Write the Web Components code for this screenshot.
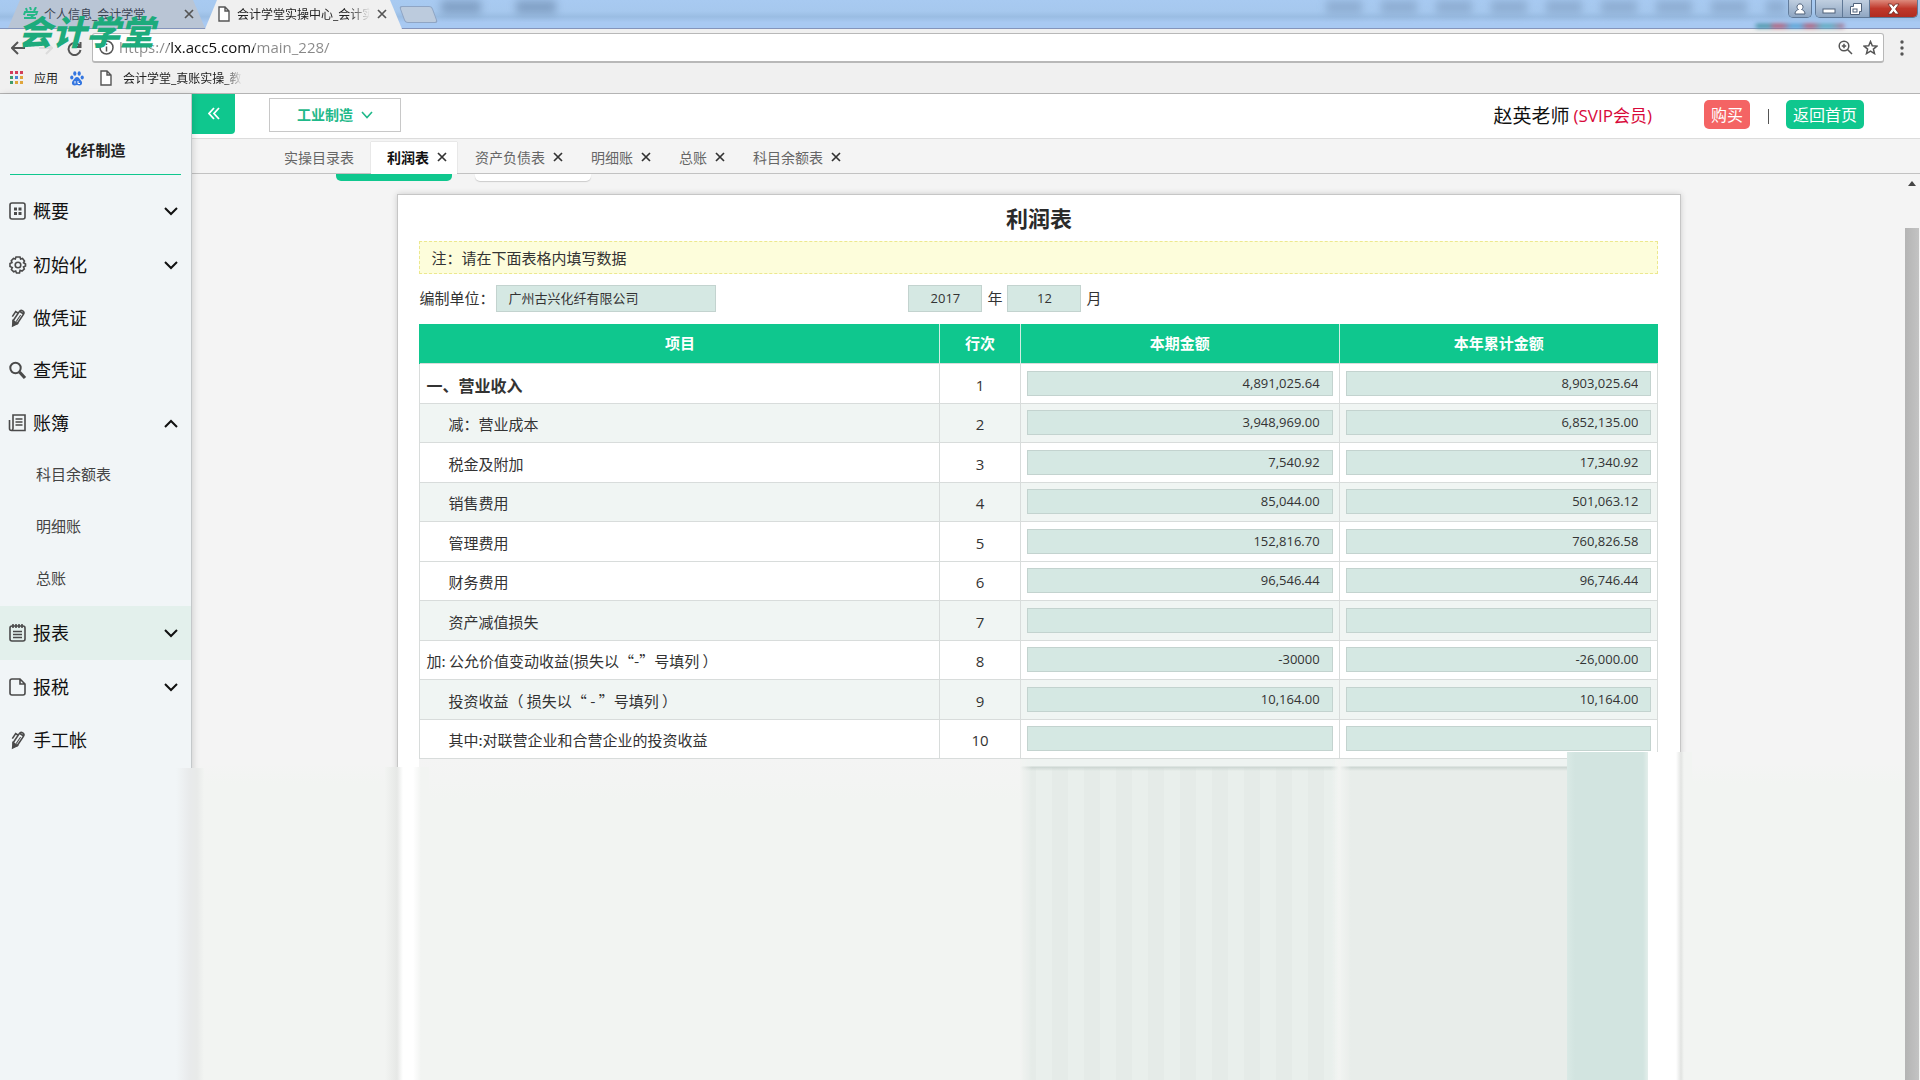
<!DOCTYPE html>
<html lang="zh-CN">
<head>
<meta charset="utf-8">
<title>会计学堂实操中心</title>
<style>
  :root {
    --green: #0fc78e;
    --line: #c8c8c8;
    --field: #d5e8e3;
    --latin: "Open Sans", "Noto Sans", "Noto Sans CJK SC", sans-serif;
  }
  body {
    margin: 0;
    height: 100vh;
    overflow: hidden;
    display: flex;
    flex-direction: column;
    font-family: "Noto Sans CJK SC", "Open Sans", sans-serif;
    font-size: 15px;
    color: #333;
  }
  .app {
    flex: 1;
    min-height: 0;
    display: flex;
  }
  .work {
    flex: 1;
    min-width: 0;
    display: flex;
    flex-direction: column;
  }
</style>
</head>
<body>
  <browser-bar></browser-bar>
  <div class="app">
    <side-nav heading="化纤制造">
      <side-item icon="grid" arrow="down">概要</side-item>
      <side-item icon="gear" arrow="down">初始化</side-item>
      <side-item icon="pen">做凭证</side-item>
      <side-item icon="search">查凭证</side-item>
      <side-item icon="book" arrow="up">账簿</side-item>
      <side-item sub>科目余额表</side-item>
      <side-item sub>明细账</side-item>
      <side-item sub>总账</side-item>
      <side-item icon="note" arrow="down" active>报表</side-item>
      <side-item icon="page" arrow="down">报税</side-item>
      <side-item icon="pen">手工帐</side-item>
    </side-nav>
    <div class="work">
      <top-bar>
        <span slot="user">赵英老师</span>
        <span slot="level">(SVIP会员)</span>
      </top-bar>
      <tab-strip>
        <sheet-tab fixed>实操目录表</sheet-tab>
        <sheet-tab active>利润表</sheet-tab>
        <sheet-tab>资产负债表</sheet-tab>
        <sheet-tab>明细账</sheet-tab>
        <sheet-tab>总账</sheet-tab>
        <sheet-tab>科目余额表</sheet-tab>
      </tab-strip>
      <scroll-pane>
        <profit-sheet></profit-sheet>
      </scroll-pane>
    </div>
  </div>

<script>
const cross = `<svg width="10" height="10" viewBox="0 0 10 10" fill="none" stroke="currentColor" stroke-width="1.700"><path d="M1 1l8 8M9 1l-8 8"/></svg>`;
const sheetIcon = `<svg width="12" height="16" viewBox="0 0 12 16" fill="#fff" stroke="#555" stroke-width="1.4"><path d="M1 1h6l4 4v10H1zM7 1v4h4"/></svg>`;

class BrowserBar extends HTMLElement {
  constructor() {
    super();
    this.attachShadow({ mode: "open" });
  }

  connectedCallback() {
    this.shadowRoot.innerHTML = `
      <style>
        :host {
          display: block;
          position: relative;
          font-family: var(--latin);
          font-size: 12px;
          background: #f0f0f0;
          border-bottom: 1px solid #b4b4b4;
        }
        * { box-sizing: border-box; }
        button { font: inherit; border: 0; padding: 0; background: none; display: flex; align-items: center; justify-content: center; }
        svg { flex: none; display: block; }
        .title {
          height: 29px;
          display: flex;
          align-items: flex-start;
          padding: 0 2px 0 8px;
          background: linear-gradient(#a8caf1, #a6c8ee 40%, #9abde3 60%, #a8c9f2 80%);
          border-bottom: 1px solid #8494bb;
        }
        .tab {
          height: 28px;
          width: 197px;
          display: flex;
          align-items: center;
          padding: 0 11px 0 36px;
          color: #3c4654;
          background: #b9c5d5;
          clip-path: polygon(0 100%, 12px 0, 185px 0, 100% 100%);
        }
        .tab.on {
          height: 29px;
          padding: 0 15px 2px 13px;
          gap: 7px;
          color: #222;
          background: #f0f0f0;
          margin-bottom: -1px;
        }
        .tab span { flex: 1; white-space: nowrap; overflow: hidden; }
        .tab.on span { -webkit-mask-image: linear-gradient(90deg, #000 85%, transparent); }
        .tab button { color: #555; }
        .new { width: 33px; height: 17px; margin-top: 6px; background: #bccbdd; border: 1px solid #8fa5c4; border-radius: 3px; transform: skewX(20deg); }
        .haze { height: 14px; filter: blur(4px); background: repeating-linear-gradient(90deg, #7391b5 0 40px, transparent 40px 75px); }
        .haze.left { width: 120px; margin-left: 6px; opacity: .7; }
        .haze.right { width: 460px; margin-left: auto; opacity: .6; background: repeating-linear-gradient(90deg, #7f9dc1 0 36px, transparent 36px 55px); }
        .win { display: flex; margin-left: 2px; height: 18px; border: 1px solid #5f7896; border-top: 0; border-radius: 0 0 5px 5px; overflow: hidden; }
        .win + .win { margin-left: 3px; }
        .win button { width: 27px; background: linear-gradient(#c0cfe0, #8fa6c2); border-right: 1px solid #5f7896; }
        .win.user button { width: 22px; border: 0; }
        .win .close { width: 47px; border: 0; background: linear-gradient(#dd8a7c, #c0382b 50%, #b02c20); }
        .address { display: flex; align-items: center; padding: 4px 0 0 0; }
        .nav { width: 92px; height: 30px; display: flex; align-items: center; justify-content: space-between; padding: 0 10px 0 11px; }
        .url {
          flex: 1;
          height: 30px;
          display: flex;
          align-items: center;
          gap: 5px;
          padding: 0 5px 0 6px;
          background: #fff;
          border: 1px solid #b8b8b8;
          border-bottom-width: 2px;
          border-radius: 3px;
        }
        .url input {
          flex: 1;
          border: 0;
          padding: 0 0 2px;
          outline: 0;
          font: 15px var(--latin);
          color: transparent;
          background: linear-gradient(90deg, #888 50px, #111 50px 135px, #888 135px);
          -webkit-background-clip: text;
          background-clip: text;
        }
        .url .tools { display: flex; gap: 10px; }
        .menu { width: 36px; }
        .marks { height: 30px; display: flex; align-items: center; padding-left: 10px; }
        .marks a { display: flex; align-items: center; color: #222; text-decoration: none; gap: 10px; margin-right: 12px; white-space: nowrap; }
        .marks a:last-child { gap: 11px; margin-left: 4px; }
        .fade { -webkit-mask-image: linear-gradient(90deg, #000 85%, transparent); }
        .logo {
          position: absolute;
          left: 18px;
          top: 14px;
          font: italic 900 34px/34px "Noto Sans CJK SC", sans-serif;
          color: #1dab7c;
          white-space: nowrap;
        }
        .mark { position: absolute; left: 22px; top: 7px; }
        .dots { position: absolute; right: 76px; top: 24px; width: 88px; height: 4px; filter: blur(2px); background: linear-gradient(90deg, #3d8d9c 15%, #b04a62 20% 30%, #4a9cd0 40% 50%, #b04a62 58% 64%, #4fa3b5 75% 85%, #b4607a); }
      </style>
      <div class="title">
        <div class="tab"><span>个人信息_会计学堂</span><button aria-label="关闭">${cross}</button></div>
        <div class="tab on">${sheetIcon}<span>会计学堂实操中心_会计实</span><button aria-label="关闭">${cross}</button></div>
        <button class="new" aria-label="新标签页"></button>
        <div class="haze left"></div>
        <div class="haze right"></div>
        <div class="win user"><button aria-label="用户"><svg width="12" height="12" viewBox="0 0 12 12" fill="#fff" stroke="#50627a"><path d="M1 11c0-3 2-4 3.500-4.500a3 3 0 1 1 3 0C9 7 11 8 11 11z"/></svg></button></div>
        <div class="win">
          <button aria-label="最小化"><svg width="14" height="12" viewBox="0 0 14 12" fill="#fff" stroke="#50627a"><rect x="1" y="6" width="12" height="4"/></svg></button>
          <button aria-label="还原"><svg width="14" height="14" viewBox="0 0 14 14" fill="none" stroke="#50627a"><path d="M4.500 1.500h8v8h-2v3h-9v-8h3z" fill="#fff"/><rect x="4" y="7" width="4" height="3"/></svg></button>
          <button class="close" aria-label="关闭窗口"><svg width="13" height="12" viewBox="0 0 13 12" fill="#fff" stroke="#6b2a24" stroke-width=".8"><path d="M1 1h3.500l2 2.500L8.500 1H12L8.500 6 12 11H8.500l-2-2.500-2 2.500H1l3.500-5z"/></svg></button>
        </div>
      </div>
      <div class="dots"></div>
      <div class="address">
        <div class="nav">
          <button aria-label="后退"><svg width="14" height="14" viewBox="0 0 14 14" fill="none" stroke="#555" stroke-width="2"><path d="M14 7H2M7 1L1 7l6 6"/></svg></button>
          <button aria-label="前进"><svg width="14" height="14" viewBox="0 0 14 14" fill="none" stroke="#dcdcdc" stroke-width="2"><path d="M0 7h12M7 1l6 6-6 6"/></svg></button>
          <button aria-label="刷新"><svg width="15" height="15" viewBox="0 0 15 15" fill="none" stroke="#555" stroke-width="2"><path d="M13 5.500A6 6 0 1 0 13.500 9M13.500 1v5h-5"/></svg></button>
        </div>
        <label class="url">
          <svg width="15" height="15" viewBox="0 0 15 15" fill="none" stroke="#555" stroke-width="1.500"><circle cx="7.500" cy="7.500" r="6.500"/><path d="M7.500 6.500v5M7.500 3.500v1.600"/></svg>
          <input aria-label="网址" value="https://lx.acc5.com/main_228/">
          <span class="tools">
            <svg width="15" height="15" viewBox="0 0 15 15" fill="none" stroke="#555" stroke-width="1.500"><circle cx="6" cy="6" r="4.800"/><path d="M9.500 9.500l4.500 4.500M6 3.800v4.400M3.800 6h4.400"/></svg>
            <svg width="15" height="15" viewBox="0 0 15 15" fill="none" stroke="#555" stroke-width="1.500"><path d="M7.500 1.500l1.800 4.200 4.600.4-3.500 3 1.100 4.500-4-2.400-4 2.400 1.100-4.500-3.500-3 4.600-.4z"/></svg>
          </span>
        </label>
        <button class="menu" aria-label="菜单"><svg width="4" height="16" viewBox="0 0 4 16" fill="#555"><circle cx="2" cy="2" r="1.700"/><circle cx="2" cy="8" r="1.700"/><circle cx="2" cy="14" r="1.700"/></svg></button>
      </div>
      <div class="marks">
        <a href="#"><svg width="14" height="14" viewBox="0 0 14 14"><path fill="#d23f5a" d="M0 0h3v3H0zM5 0h3v3H5zM10 0h3v3h-3z"/><path fill="#3f9d6b" d="M0 5h3v3H0zM0 10h3v3H0z"/><path fill="#4a86d8" d="M5 5h3v3H5z"/><path fill="#e0a63c" d="M10 5h3v3h-3zM5 10h3v3H5zM10 10h3v3h-3z"/></svg>应用</a>
        <a href="#" aria-label="百度"><svg width="14" height="15" viewBox="0 0 14 15" fill="#3476e0"><ellipse cx="1.800" cy="6.500" rx="1.600" ry="2"/><ellipse cx="4.800" cy="2.500" rx="1.600" ry="2.200"/><ellipse cx="9.200" cy="2.500" rx="1.600" ry="2.200"/><ellipse cx="12.200" cy="6.500" rx="1.600" ry="2"/><path d="M7 6c2 0 2.500 2 4 3.500 2 2 1 5-1.500 5-1 0-1.500-.4-2.500-.4s-1.500.4-2.500.4C2 14.500 1 11.500 3 9.500 4.500 8 5 6 7 6z"/><path d="M5 10v2.500M8 10v2.500h2" stroke="#fff" fill="none"/></svg></a>
        <a href="#">${sheetIcon}<span class="fade">会计学堂_真账实操_教</span></a>
      </div>
      <svg class="mark" width="17" height="13" viewBox="0 0 17 13" fill="none" stroke="#26b888" stroke-width="2"><path d="M4 1l1 3M8 0l1 3M14 0l-2 4M2 8l1-3h12l-1 3M5 8h7l-3 2M2 11h12"/></svg>
      <div class="logo">会计学堂</div>
    `;
  }
}

const ICONS = {
  grid: `<rect x="1" y="1" width="15" height="16" rx="2"/><path stroke-width="3" d="M5 7h3M9.500 7h3M5 11.500h3M9.500 11.500h3"/>`,
  gear: `<path d="M7 1h4l.6 2 1.900-.6 2 2.600-1 1.700L16.500 8v2l-2 1 .8 2-2.300 2-1.900-.7L10.500 17h-3l-.8-2-2 .8-2.300-2.300.9-1.900L1 10.500v-3l2-.9-.7-1.900L4.500 2.400 6.300 3z"/><circle cx="9" cy="9" r="2.800"/>`,
  pen: `<g transform="rotate(34 9 9)"><path d="M6.500 14V3a2.500 2.500 0 0 1 5 0v11l-2.500 3zM6.500 5H3.500v6"/><path d="M9.500 5v8" stroke-width="1"/><path fill="#4a4a4a" d="M6.500 14h5L9 18.500zM7 2.500h4"/></g>`,
  search: `<circle cx="6.500" cy="7" r="5.200" stroke-width="2"/><path stroke-width="3.200" d="M10.500 11l5.500 6"/>`,
  book: `<path d="M4 14.500V1h12v15.500H2.500a2 2 0 0 1-2-2V6M4 14.500a2 2 0 0 1-1.500 2M6.500 5h7M6.500 8h7M6.500 11h7"/>`,
  note: `<rect x="1" y="2" width="15" height="15" rx="2"/><path d="M4 0v4M7 0v4M10 0v4M13 0v4M4 7.500h9M4 10.500h9M4 13.500h9"/>`,
  page: `<path d="M3 1h8l5 5v9a2 2 0 0 1-2 2H3a2 2 0 0 1-2-2V3a2 2 0 0 1 2-2zM11 1v5h5"/>`
};

class SideNav extends HTMLElement {
  constructor() {
    super();
    this.attachShadow({ mode: "open" });
  }

  connectedCallback() {
    this.shadowRoot.innerHTML = `
      <style>
        :host {
          display: block;
          position: relative;
          z-index: 1;
          width: 191px;
          flex: none;
          background: #f1f5f7;
          border-right: 1px solid #c4c8ca;
          box-shadow: 2px 0 6px rgba(0, 0, 0, .12);
        }
        h2 {
          margin: 0 10px 9px;
          padding: 43px 0 11px;
          font-size: 15px;
          line-height: 26px;
          text-align: center;
          color: #222;
          border-bottom: 1px solid var(--green);
        }
        /* soft edge along the lower part of the column */
        .edge {
          position: absolute;
          left: 176px;
          bottom: 0;
          width: 28px;
          height: 312px;
          background: linear-gradient(90deg, #f1f5f7, #e8eaeb 50%, #e8eae9 75%, #f2f4f2);
        }
      </style>
      <h2></h2>
      <nav><slot></slot></nav>
      <div class="edge"></div>
    `;
    this.shadowRoot.querySelector("h2").textContent = this.getAttribute("heading");
  }
}

class SideItem extends HTMLElement {
  constructor() {
    super();
    this.attachShadow({ mode: "open" });
  }

  connectedCallback() {
    const icon = ICONS[this.getAttribute("icon")];
    const arrow = this.getAttribute("arrow");
    this.shadowRoot.innerHTML = `
      <style>
        :host { display: block; }
        button {
          width: 100%;
          height: 52px;
          display: flex;
          align-items: center;
          gap: 6px;
          padding: 0 13px 0 9px;
          border: 0;
          background: none;
          font: inherit;
          font-size: 18px;
          color: #111;
          text-align: left;
        }
        :host([arrow]) button { height: 54px; }
        :host([active]) button { background: #e3f0ec; }
        :host([sub]) button { padding: 0 0 2px 36px; font-size: 15px; color: #444; }
        span { flex: 1; padding-bottom: 3px; }
      </style>
      <button>
        ${icon ? `<svg width="18" height="18" viewBox="0 0 18 18" overflow="visible" fill="none" stroke="#4a4a4a" stroke-width="1.600">${icon}</svg>` : ""}
        <span><slot></slot></span>
        ${arrow ? `<svg width="14" height="9" viewBox="0 0 14 9" fill="none" stroke="#111" stroke-width="2"><path d="${arrow === "up" ? "M1 8l6-6 6 6" : "M1 1l6 6 6-6"}"/></svg>` : ""}
      </button>
    `;
  }
}

class TopBar extends HTMLElement {
  constructor() {
    super();
    this.attachShadow({ mode: "open" });
  }

  connectedCallback() {
    this.shadowRoot.innerHTML = `
      <style>
        :host {
          display: flex;
          align-items: center;
          height: 45px;
          box-sizing: border-box;
          flex: none;
          background: #fff;
          border-bottom: 1px solid #dcdcdc;
          font-family: var(--latin);
          padding: 0 56px 3px 0;
        }
        button { border: 0; font: inherit; color: #fff; }
        .fold { align-self: flex-start; width: 43px; height: 40px; background: var(--green); border-radius: 0 0 4px 0; padding: 0; }
        .trade { position: relative; margin: 0 auto 0 34px; }
        select {
          appearance: none;
          display: block;
          width: 132px;
          height: 34px;
          padding: 0 0 0 27px;
          border: 1px solid var(--line);
          background: #fff;
          font: bold 14px var(--latin);
          color: #1fb98a;
        }
        .trade svg { position: absolute; right: 28px; top: 13px; pointer-events: none; }
        .user { font-size: 19px; color: #111; margin-right: 4px; }
        .level { font-size: 17px; color: #d8093a; margin-right: 52px; }
        .btn { height: 29px; padding: 0 7px; border-radius: 5px; font-size: 16px; line-height: 28px; background: var(--green); }
        .buy { background: #f46464; }
        .bar { width: 1px; height: 15px; margin: 3px 17px 0 18px; background: #555; }
      </style>
      <button class="fold" aria-label="收起"><svg width="12" height="13" viewBox="0 0 12 13" fill="none" stroke="#fff" stroke-width="1.800"><path d="M6 1L1 6.500 6 12M11 1L6 6.500 11 12"/></svg></button>
      <div class="trade">
        <select aria-label="行业"><option>工业制造</option></select>
        <svg width="12" height="8" viewBox="0 0 12 8" fill="none" stroke="#1fb98a" stroke-width="1.600"><path d="M1 1l5 5.500L11 1"/></svg>
      </div>
      <span class="user"><slot name="user"></slot></span>
      <span class="level"><slot name="level"></slot></span>
      <button class="btn buy">购买</button>
      <span class="bar"></span>
      <button class="btn">返回首页</button>
    `;
  }
}

class TabStrip extends HTMLElement {
  constructor() {
    super();
    this.attachShadow({ mode: "open" });
  }

  connectedCallback() {
    this.shadowRoot.innerHTML = `
      <style>
        :host {
          display: flex;
          align-items: flex-end;
          gap: 2px;
          height: 34px;
          flex: none;
          padding-left: 76px;
          background: #f4f4f4;
          border-bottom: 1px solid #c2c2c2;
        }
      </style>
      <slot></slot>
    `;
  }
}

class SheetTab extends HTMLElement {
  constructor() {
    super();
    this.attachShadow({ mode: "open" });
  }

  connectedCallback() {
    this.shadowRoot.innerHTML = `
      <style>
        :host {
          display: flex;
          align-items: center;
          gap: 8px;
          height: 31px;
          box-sizing: border-box;
          padding: 0 10px 2px 16px;
          font-size: 14px;
          color: #666;
        }
        :host([fixed]) { padding-right: 15px; }
        :host([active]) {
          margin-bottom: -1px;
          height: 32px;
          background: #fff;
          color: #111;
          font-weight: bold;
          box-shadow: 0 0 1px #aaa;
        }
        a { color: inherit; text-decoration: none; }
        button { border: 0; padding: 0; background: none; color: #333; display: flex; }
      </style>
      <a href="#"><slot></slot></a>
      ${this.hasAttribute("fixed") ? "" : `<button aria-label="关闭">${cross}</button>`}
    `;
  }
}

class ScrollPane extends HTMLElement {
  constructor() {
    super();
    this.attachShadow({ mode: "open" });
  }

  connectedCallback() {
    this.shadowRoot.innerHTML = `
      <style>
        :host {
          flex: 1;
          min-height: 0;
          display: flex;
          background: linear-gradient(#f4f4f4 590px, #f2f4f2 610px);
        }
        .view { flex: 1; min-width: 0; overflow: hidden; display: flex; flex-direction: column; }
        .cut { display: flex; gap: 23px; padding-left: 144px; height: 20px; flex: none; }
        .cut i { width: 116px; height: 7px; background: var(--green); border-radius: 0 0 5px 5px; }
        .cut i + i { background: #fff; box-shadow: 0 1px 1px #ccc; }
        .rail { width: 16px; flex: none; display: flex; flex-direction: column; align-items: center; padding-top: 7px; box-sizing: border-box; }
        .thumb { width: 14px; margin-top: 42px; flex: 1; background: linear-gradient(90deg, #b4b4b4, #c3c3c3); }
      </style>
      <div class="view">
        <div class="cut"><i></i><i></i></div>
        <slot></slot>
      </div>
      <div class="rail">
        <svg width="8" height="5" viewBox="0 0 8 5" fill="#444"><path d="M0 5l4-5 4 5z"/></svg>
        <div class="thumb"></div>
      </div>
    `;
  }
}

const ROWS = [
  { name: "一、营业收入", now: "4,891,025.64", year: "8,903,025.64", cls: "head" },
  { name: "减：营业成本", now: "3,948,969.00", year: "6,852,135.00", cls: "in tint" },
  { name: "税金及附加", now: "7,540.92", year: "17,340.92", cls: "in" },
  { name: "销售费用", now: "85,044.00", year: "501,063.12", cls: "in tint" },
  { name: "管理费用", now: "152,816.70", year: "760,826.58", cls: "in" },
  { name: "财务费用", now: "96,546.44", year: "96,746.44", cls: "in" },
  { name: "资产减值损失", now: "", year: "", cls: "in tint" },
  { name: "加: 公允价值变动收益(损失以“-”号填列 ）", now: "-30000", year: "-26,000.00", cls: "" },
  { name: "投资收益（ 损失以“ - ”号填列 ）", now: "10,164.00", year: "10,164.00", cls: "in tint" },
  { name: "其中:对联营企业和合营企业的投资收益", now: "", year: "", cls: "in" }
];

class ProfitSheet extends HTMLElement {
  constructor() {
    super();
    this.attachShadow({ mode: "open" });
  }

  connectedCallback() {
    const body = ROWS.map((row, i) => `
      <tr class="${row.cls}">
        <td class="name">${row.name}</td>
        <td class="no">${i + 1}</td>
        <td class="sum"><input aria-label="${row.name} 本期金额" value="${row.now}"></td>
        <td class="sum"><input aria-label="${row.name} 本年累计金额" value="${row.year}"></td>
      </tr>`).join("");

    this.shadowRoot.innerHTML = `
      <style>
        :host {
          flex: 1 0 auto;
          display: flex;
          flex-direction: column;
          width: 75%;
          margin-left: 12%;
          box-sizing: border-box;
          padding: 0 22px 0 21px;
          background: #fff;
          border: 1px solid #c6c6c6;
          border-bottom: 0;
          box-shadow: 0 0 6px rgba(0, 0, 0, .16);
        }
        * { box-sizing: border-box; }
        h1 { margin: 7px 0 9px; font-size: 22px; line-height: 30px; text-align: center; color: #2a2a2a; }
        .tip { height: 33px; line-height: 31px; padding-left: 11px; background: #fdfddb; border: 1px dashed #ece88f; }
        input {
          height: 25px;
          border: 1px solid #c3d3cf;
          background: var(--field);
          font: 13px var(--latin);
          color: #333;
          padding: 0 12px 1px;
          outline: 0;
        }
        .meta { display: grid; grid-template-columns: 489px 1fr; height: 50px; align-items: center; padding-bottom: 2px; }
        .meta div { display: flex; align-items: center; }
        .meta input { height: 27px; }
        .meta .unit { width: 220px; margin-left: 2px; padding: 0 11px 1px; }
        .meta .date { width: 74px; text-align: center; }
        .meta label { white-space: nowrap; padding-bottom: 2px; }
        .meta .date + label { margin: 0 5px; }
        table { width: 100%; border-collapse: collapse; table-layout: fixed; }
        th { height: 39px; padding: 0 0 2px; color: #fff; background: var(--green); border-left: 1px solid #cfeee3; font-size: 15px; }
        th:first-child { border-left-color: var(--green); }
        td { height: 39px; padding: 0; border: 1px solid #d8dcdb; line-height: 24px; }
        tr:nth-child(odd) td { height: 40px; }
        .tint { background: #f0f5f3; }
        .name { padding: 3px 0 0 6px; }
        .in .name { padding-left: 28px; }
        .head .name { font-size: 16px; font-weight: bold; }
        .no { padding-top: 3px; text-align: center; font-family: var(--latin); font-size: 15px; }
        .sum { padding: 0 6px; }
        .sum input { display: block; width: 100%; text-align: right; }
        .tail {
          flex: 1;
          position: relative;
          display: grid;
          grid-template-columns: 42% 6.5% 1fr 1fr;
          min-height: 100px;
        }
        .tail div { background: linear-gradient(#f4f4f4, #f2f4f2 40px); }
        .tail .blank { background: linear-gradient(90deg, #f2f4f2, transparent 12px, transparent calc(100% - 8px), #f2f4f2), linear-gradient(#eef3f1 7px, #cbd5d1 8px, #e8edea 12px); }
        .tail .bands { background: linear-gradient(90deg, #f2f4f2, transparent 12px, transparent calc(100% - 8px), #f2f4f2), linear-gradient(#eef3f1 7px, #cbd5d1 8px, transparent 12px), repeating-linear-gradient(90deg, #e5ebe8 0 16px, #e9efec 16px 32px); }
        /* drawn over the last row and the panel edges */
        .strip { position: absolute; right: 0; top: -7px; bottom: 0; width: 91px; }
        .tail .strip { background: linear-gradient(90deg, #d9e9e5, #d2e4e0 8px, #d2e4e0 76px, #f5f8f6 86px, #fff); }
        .left, .right { position: absolute; top: 8px; bottom: 0; width: 44px; }
        .tail .left { left: -34px; background: linear-gradient(90deg, #f2f4f2, #e6e8e6 12px, #fff 18px, #fff 28px, #f2f4f2 36px); }
        .tail .right { right: -34px; top: -7px; background: linear-gradient(90deg, #fff, #fff 28px, #e2e4e2 33px, #f2f4f2 36px); }
      </style>
      <h1>利润表</h1>
      <div class="tip">注：请在下面表格内填写数据</div>
      <div class="meta">
        <div><label for="unit">编制单位：</label><input id="unit" class="unit" value="广州古兴化纤有限公司"></div>
        <div>
          <input id="year" class="date" value="2017"><label for="year">年</label>
          <input id="month" class="date" value="12"><label for="month">月</label>
        </div>
      </div>
      <table>
        <colgroup><col style="width:42%"><col style="width:6.5%"><col><col></colgroup>
        <thead><tr><th>项目</th><th>行次</th><th>本期金额</th><th>本年累计金额</th></tr></thead>
        <tbody>${body}</tbody>
      </table>
      <div class="tail">
        <div></div><div></div><div class="bands"></div><div class="blank"></div>
        <div class="strip"></div><div class="left"></div><div class="right"></div>
      </div>
    `;
  }
}

customElements.define("browser-bar", BrowserBar);
customElements.define("side-nav", SideNav);
customElements.define("side-item", SideItem);
customElements.define("top-bar", TopBar);
customElements.define("tab-strip", TabStrip);
customElements.define("sheet-tab", SheetTab);
customElements.define("scroll-pane", ScrollPane);
customElements.define("profit-sheet", ProfitSheet);
</script>
</body>
</html>
